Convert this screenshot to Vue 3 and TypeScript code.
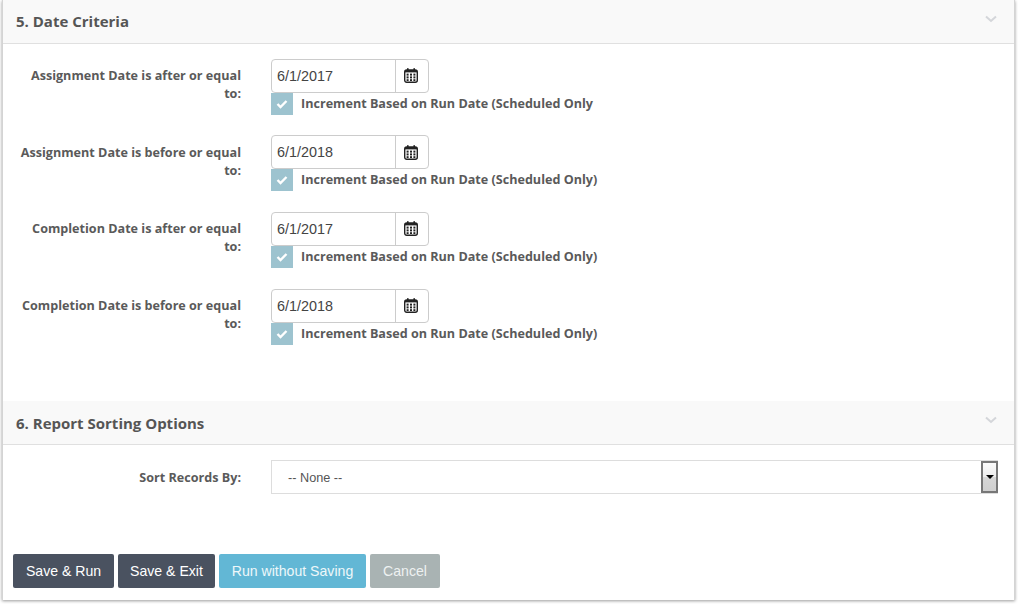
<script setup lang="ts">
interface Row { label: string; value: string; check: string }
const rows: Row[] = [
  { label: 'Assignment Date is after or equal to:', value: '6/1/2017', check: 'Increment Based on Run Date (Scheduled Only' },
  { label: 'Assignment Date is before or equal to:', value: '6/1/2018', check: 'Increment Based on Run Date (Scheduled Only)' },
  { label: 'Completion Date is after or equal to:', value: '6/1/2017', check: 'Increment Based on Run Date (Scheduled Only)' },
  { label: 'Completion Date is before or equal to:', value: '6/1/2018', check: 'Increment Based on Run Date (Scheduled Only)' },
]
</script>

<template>
  <div class="page">
    <div class="panel">
      <header class="head">
        <h2>5. Date Criteria</h2>
        <svg class="chev" width="12" height="8" viewBox="0 0 12 8"><path d="M1 1.5l5 4.5 5-4.5" fill="none" stroke="#d4d6da" stroke-width="2"/></svg>
      </header>
      <section class="dates">
        <div v-for="r in rows" :key="r.label" class="row">
          <label class="lbl">{{ r.label }}</label>
          <div class="ctrl">
            <div class="datebox">
              <span class="val">{{ r.value }}</span>
              <span class="cal">
                <svg width="14" height="15" viewBox="0 0 14 15">
                  <rect x="0.7" y="2" width="12.6" height="12.3" rx="2" fill="#fff" stroke="#222" stroke-width="1.4"/>
                  <rect x="1" y="2" width="12" height="2.4" fill="#222"/>
                  <rect x="3" y="0.2" width="1.6" height="3" fill="#222"/>
                  <rect x="9.4" y="0.2" width="1.6" height="3" fill="#222"/>
                  <g fill="#222">
                    <rect x="2.6" y="5.6" width="2" height="2"/><rect x="6" y="5.6" width="2" height="2"/><rect x="9.4" y="5.6" width="2" height="2"/>
                    <rect x="2.6" y="8.4" width="2" height="2"/><rect x="6" y="8.4" width="2" height="2"/><rect x="9.4" y="8.4" width="2" height="2"/>
                    <rect x="2.6" y="11.2" width="2" height="1.8"/><rect x="6" y="11.2" width="2" height="1.8"/><rect x="9.4" y="11.2" width="2" height="1.8"/>
                  </g>
                </svg>
              </span>
            </div>
            <div class="check">
              <span class="box">
                <svg width="12" height="10" viewBox="0 0 12 10"><path d="M1.5 5l3 3 6-6" fill="none" stroke="#fff" stroke-width="2.4"/></svg>
              </span>
              <span class="chk-text">{{ r.check }}</span>
            </div>
          </div>
        </div>
      </section>
      <header class="head second">
        <h2>6. Report Sorting Options</h2>
        <svg class="chev" width="12" height="8" viewBox="0 0 12 8"><path d="M1 1.5l5 4.5 5-4.5" fill="none" stroke="#d4d6da" stroke-width="2"/></svg>
      </header>
      <section class="sort">
        <label class="lbl sort-lbl">Sort Records By:</label>
        <div class="select">
          <span>-- None --</span>
          <span class="arrow"><i></i></span>
        </div>
      </section>
      <footer class="actions">
        <button class="btn dark b1">Save &amp; Run</button>
        <button class="btn dark b2">Save &amp; Exit</button>
        <button class="btn info b3">Run without Saving</button>
        <button class="btn gray b4">Cancel</button>
      </footer>
    </div>
  </div>
</template>

<style>
html, body { margin: 0; background: #fff; }
</style>

<style scoped>
.page { width: 1018px; height: 604px; overflow: hidden; background: #fff; box-sizing: border-box; padding: 0 3px 0 2px; }
.panel {
  height: 600px; box-sizing: border-box; background: #fff;
  border-left: 1px solid #d4d4d4; border-right: 1px solid #d4d4d4;
  box-shadow: 0 1px 3px rgba(0,0,0,.4);
  font-family: "Open Sans", sans-serif; color: #5a5a5a;
  display: flex; flex-direction: column;
}
.head {
  height: 44px; flex: none; box-sizing: border-box; background: #f9f9f9; border-bottom: 1px solid #e0e0e0;
  display: flex; justify-content: space-between; align-items: flex-start; padding: 0 17px 0 13px;
}
.head h2 { margin: 0; font-size: 15px; font-weight: 700; line-height: 43px; color: #555; }
.second h2 { line-height: 45px; }
.chev { margin-top: 15px; }
.dates { height: 357px; flex: none; box-sizing: border-box; padding-top: 14.6px; }
.row { display: flex; height: 76.7px; }
.lbl { width: 238px; flex: none; text-align: right; font-size: 12.6px; font-weight: 700; line-height: 18px; padding: 8.4px 0 0 16px; box-sizing: border-box; color: #5a5a5a; }
.ctrl { margin-left: 30px; }
.datebox {
  width: 158px; height: 34px; box-sizing: border-box; border: 1px solid #ccc; border-radius: 4px;
  display: flex; background: #fff;
}
.val { flex: 1; padding-left: 5px; font: 14.4px/33px "Liberation Sans", Arial, sans-serif; color: #444; }
.cal { width: 33px; border-left: 1px solid #ccc; box-sizing: border-box; display: flex; align-items: center; justify-content: center; padding-right: 2px; }
.check { display: flex; align-items: center; height: 22px; }
.box { width: 22px; height: 22px; background: #9dc3cf; display: flex; align-items: center; justify-content: center; }
.chk-text { margin-left: 8px; font-size: 12.6px; font-weight: 700; color: #5a5a5a; position: relative; top: -0.6px; }
.sort { display: flex; height: 109px; flex: none; padding-top: 15px; box-sizing: border-box; }
.sort-lbl { padding-top: 9px; }
.select {
  margin-left: 30px; width: 727px; height: 34px; box-sizing: border-box; border: 1px solid #ddd;
  font: 12.7px/34px "Liberation Sans", Arial, sans-serif; color: #555; padding-left: 16px; position: relative;
}
.arrow {
  position: absolute; right: -1px; top: 0; width: 17px; height: 32px; box-sizing: border-box;
  border: 2px solid #777; background: linear-gradient(#fbfbfb, #ececec 50%, #d6d6d6 52%, #cfcfcf);
  display: flex; align-items: center; justify-content: center;
}
.arrow i { width: 0; height: 0; border-left: 4px solid transparent; border-right: 4px solid transparent; border-top: 4px solid #000; }
.actions { display: flex; gap: 4px; padding-left: 10px; }
.btn {
  height: 34px; border: 0; border-radius: 2px; padding: 0; color: #fff;
  font: 14.1px "Liberation Sans", Arial, sans-serif;
}
.dark { background: #4a5260; }
.info { background: #62b7d5; color: #eef7fa; }
.gray { background: #a9b3b3; color: #eef1f1; }
.b1 { width: 101px; } .b2 { width: 97px; } .b3 { width: 147px; } .b4 { width: 70px; }
</style>
